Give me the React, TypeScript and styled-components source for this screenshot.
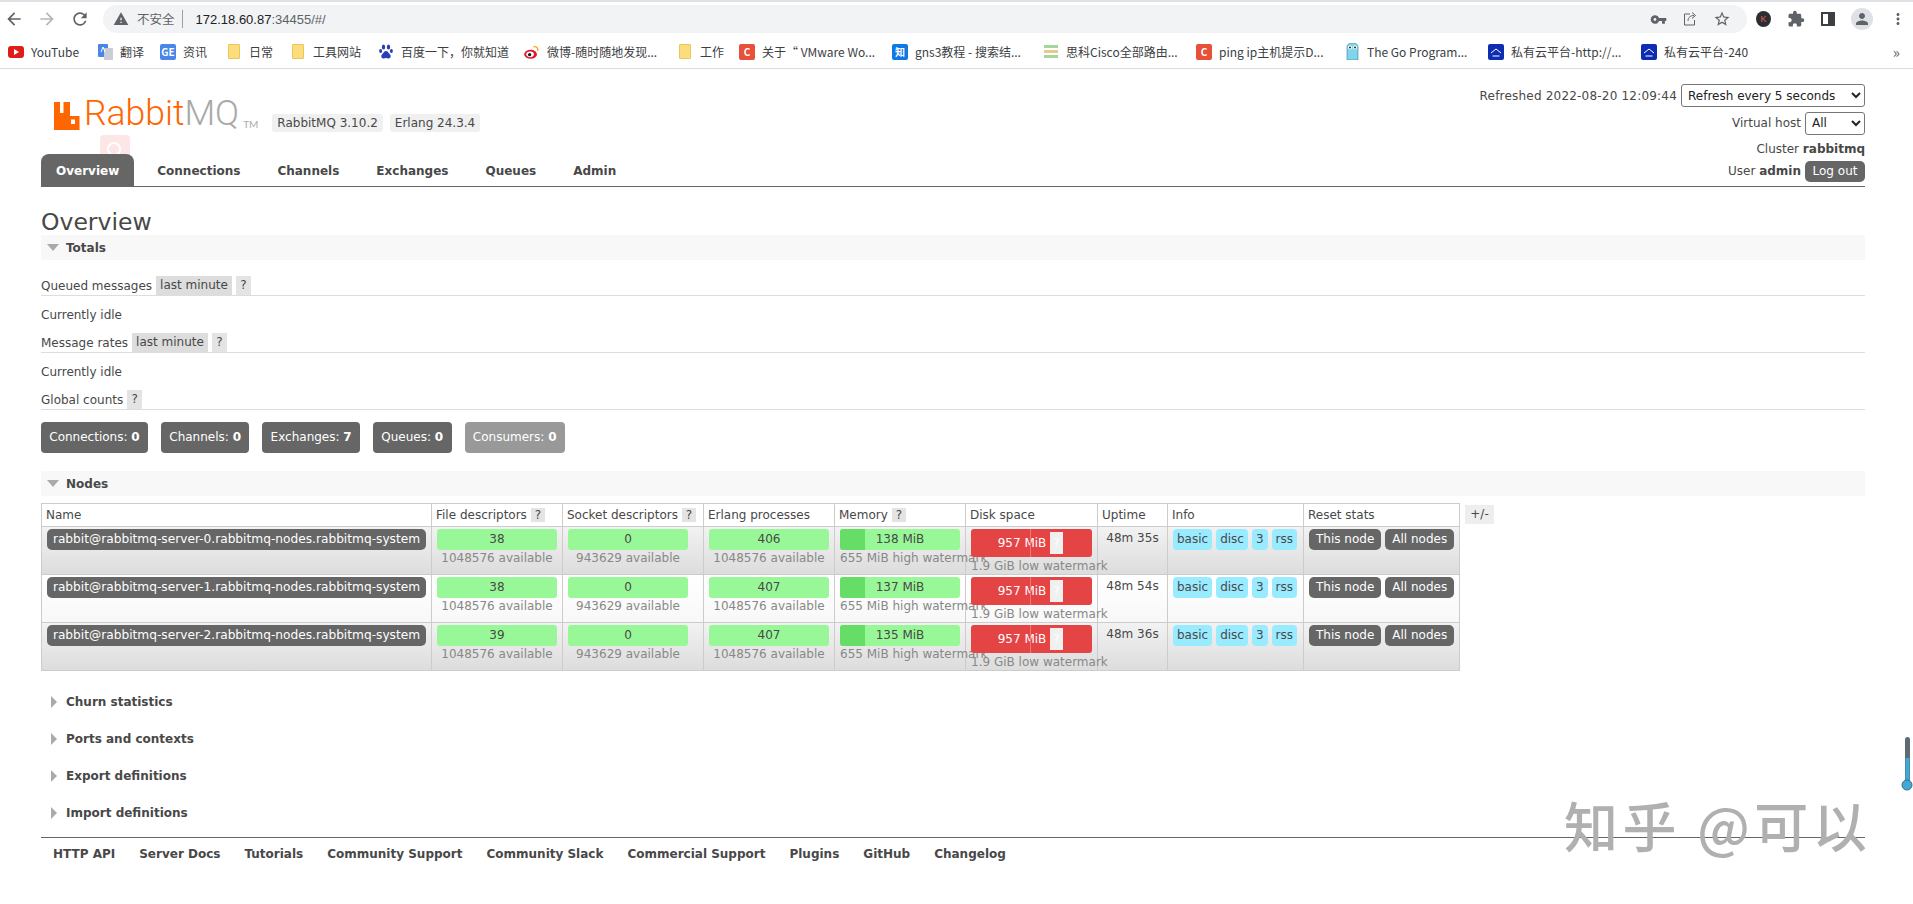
import styled, { createGlobalStyle } from "styled-components";
import {
  MdArrowBack,
  MdArrowForward,
  MdExtension,
  MdMoreVert,
  MdPerson,
  MdRefresh,
  MdStarBorder,
  MdVpnKey,
  MdWarning,
} from "react-icons/md";

const GlobalStyle = createGlobalStyle`
  html, body {
    margin: 0;
    padding: 0;
    background: #fff;
    overflow: hidden;
  }
  body {
    font-family: "DejaVu Sans", Verdana, sans-serif;
    font-size: 12px;
    color: #484848;
  }
`;

const Screen = styled.div`
  position: relative;
  width: 1913px;
  height: 904px;
  overflow: hidden;
`;

/* browser chrome */
const Toolbar = styled.div`
  height: 35px;
  box-sizing: border-box;
  border-top: 2px solid #dee1e6;
  padding: 3px 0 0 4px;
  display: flex;
  align-items: flex-start;
`;
const NavButton = styled.div<{ $dim?: boolean }>`
  width: 32px;
  height: 28px;
  display: flex;
  align-items: center;
  color: ${(p) => (p.$dim ? "#b4b6b9" : "#5f6368")};
  font-size: 20px;
  margin-right: 1px;
`;
const AddressBar = styled.div`
  margin-left: 0;
  width: 1644px;
  height: 28px;
  box-sizing: border-box;
  border-radius: 14px;
  background: #f1f3f4;
  display: flex;
  align-items: center;
  padding: 0 16px 0 10px;
  font-family: "Noto Sans CJK SC", "Liberation Sans", sans-serif;
  font-size: 13px;
  color: #5f6368;
`;
const NotSecure = styled.span`
  margin-left: 8px;
  padding-right: 7px;
  border-right: 1px solid #9aa0a6;
  line-height: 18px;
  font-size: 12.5px;
`;
const Host = styled.span`
  margin-left: 13px;
  font-size: 13px;
  color: #202124;
  font-family: "Liberation Sans", sans-serif;
  span {
    color: #5f6368;
  }
`;
const AddressActions = styled.div`
  margin-left: auto;
  display: flex;
  align-items: center;
  gap: 15px;
  font-size: 17px;
  color: #5f6368;
`;
const ChromeActions = styled.div`
  display: flex;
  align-items: center;
  height: 28px;
  margin-left: 9px;
  gap: 16px;
  font-size: 18px;
  color: #5f6368;
`;
const ProfileDot = styled.div`
  width: 15px;
  height: 16px;
  border-radius: 50%;
  background: #2b2f33;
  color: #e25c5c;
  font: 9px "Liberation Sans", sans-serif;
  text-align: center;
  line-height: 16px;
`;
const Avatar = styled.div`
  width: 22px;
  height: 22px;
  border-radius: 50%;
  background: #dee1e6;
  color: #5f6368;
  font-size: 18px;
  display: flex;
  align-items: center;
  justify-content: center;
`;

const BookmarkBar = styled.div`
  height: 34px;
  box-sizing: border-box;
  border-bottom: 1px solid #dadce0;
  display: flex;
  align-items: center;
  padding: 0 0 0 8px;
  font-family: "Noto Sans CJK SC", "Liberation Sans", sans-serif;
  font-size: 12px;
  color: #3c4043;
`;
const Bookmark = styled.div<{ $width: number }>`
  display: flex;
  align-items: center;
  width: ${(p) => p.$width}px;
  flex: none;
  white-space: nowrap;
`;
const BookmarkIconBox = styled.div`
  width: 16px;
  height: 16px;
  flex: none;
  margin-right: 7px;
  display: flex;
  align-items: center;
  justify-content: center;
`;
const LetterIcon = styled.div<{ $bg: string }>`
  width: 16px;
  height: 16px;
  background: ${(p) => p.$bg};
  color: #fff;
  border-radius: 2px;
  font-size: 10px;
  line-height: 16px;
  text-align: center;
  font-weight: 700;
`;
const Folder = styled.div`
  width: 12px;
  height: 15px;
  background: #fbdc7e;
  border: 1px solid #ecc65a;
  box-sizing: border-box;
  border-radius: 1px;
`;
const MoreBookmarks = styled.div`
  margin-left: auto;
  margin-right: 13px;
  font-size: 15px;
  color: #5f6368;
`;

/* rabbitmq page */
const Page = styled.div`
  padding: 0 48px 0 41px;
`;
const Header = styled.div`
  height: 117px;
  border-bottom: 1px solid #666;
  display: flex;
  justify-content: space-between;
`;
const HeaderLeft = styled.div`
  display: flex;
  flex-direction: column;
  justify-content: flex-end;
`;
const LogoRow = styled.div`
  display: flex;
  align-items: flex-end;
  padding: 0 0 0 12px;
  margin-bottom: 22px;
  position: relative;
`;
const LogoMark = styled.svg`
  flex: none;
  margin-bottom: 2px;
`;
const LogoText = styled.div`
  font-family: "Roboto", sans-serif;
  font-weight: 300;
  font-size: 35.5px;
  line-height: 37px;
  color: #f60;
  margin-left: 4px;
  span {
    color: #a9a9a9;
  }
`;
const Tm = styled.div`
  font-size: 10px;
  color: #aaa;
  font-family: "Lato", sans-serif;
  margin: 0 14px 2px 4px;
`;
const Version = styled.div`
  background: #f0f0f0;
  border-radius: 3px;
  padding: 0 5px;
  line-height: 18px;
  margin: 0 7px 0 0;
  font-size: 12px;
  position: relative;
`;
const SearchGhost = styled.div`
  position: absolute;
  left: 59px;
  top: 40px;
  width: 30px;
  height: 30px;
  background: #fce6e6;
  border-radius: 4px;
  color: #fff;
  display: flex;
  align-items: center;
  justify-content: center;
`;
const Tabs = styled.div`
  display: flex;
  align-items: flex-end;
  position: relative;
  height: 32px;
`;
const Tab = styled.a<{ $active?: boolean }>`
  height: 32px;
  box-sizing: border-box;
  padding: 0 15px;
  margin-right: ${(p) => (p.$active ? "8px" : "7px")};
  line-height: 34px;
  font-weight: 700;
  font-size: 12px;
  border-radius: 8px 8px 0 0;
  color: ${(p) => (p.$active ? "#fff" : "#484848")};
  background: ${(p) => (p.$active ? "#666" : "transparent")};
`;
const Login = styled.div`
  padding-top: 15px;
  display: flex;
  flex-direction: column;
  align-items: flex-end;
`;
const LoginRow = styled.div<{ $height: number }>`
  display: flex;
  align-items: center;
  gap: 4px;
  height: ${(p) => p.$height}px;
  b {
    font-weight: 700;
    color: #484848;
  }
`;
const RefreshedText = styled.span`
  letter-spacing: 0.2px;
`;
const RefreshSelect = styled.select<{ $width: number }>`
  width: ${(p) => p.$width}px;
  height: 23px;
  box-sizing: border-box;
  font-family: "DejaVu Sans", sans-serif;
  font-size: 12px;
  color: #222;
  background: #fff;
  border: 1px solid #767676;
  border-radius: 3px;
  padding: 0 0 0 2px;
`;
const LogOut = styled.button`
  height: 21px;
  width: 60px;
  padding: 0;
  border: 0;
  background: #666;
  color: #fff;
  font-family: "DejaVu Sans", sans-serif;
  font-size: 12px;
  border-radius: 5px;
`;

const Title = styled.h1`
  margin: 0;
  padding-top: 19px;
  height: 29px;
  font-weight: 400;
  font-size: 23.5px;
  line-height: 33px;
  color: #484848;
`;
const SectionHead = styled.div<{ $open?: boolean }>`
  display: flex;
  align-items: center;
  height: 25px;
  padding-left: ${(p) => (p.$open ? "6px" : "10px")};
  background: ${(p) => (p.$open ? "#f8f8f8" : "transparent")};
  font-weight: 700;
  font-size: 12px;
`;
const ArrowDown = styled.div`
  width: 0;
  height: 0;
  border-left: 6px solid transparent;
  border-right: 6px solid transparent;
  border-top: 7px solid #aaa;
  margin-right: 7px;
`;
const ArrowRight = styled.div`
  width: 0;
  height: 0;
  border-top: 6px solid transparent;
  border-bottom: 6px solid transparent;
  border-left: 6px solid #aaa;
  margin-right: 9px;
`;
const Legend = styled.div<{ $top: number }>`
  margin-top: ${(p) => p.$top}px;
  height: 19px;
  display: flex;
  align-items: center;
  gap: 4px;
  border-bottom: 1px solid #ddd;
`;
const RangeBadge = styled.span`
  background: #ddd;
  padding: 0 4px;
  line-height: 19px;
`;
const Help = styled.span`
  background: #e4e4e4;
  padding: 0 4px;
  line-height: 19px;
  width: 7px;
  text-align: center;
`;
const Idle = styled.div`
  margin-top: 10px;
  height: 19px;
  line-height: 19px;
`;
const Counts = styled.div`
  display: flex;
  gap: 13px;
  margin-top: 12px;
`;
const CountButton = styled.div<{ $muted?: boolean }>`
  height: 31px;
  line-height: 31px;
  padding: 0 8.3px;
  border-radius: 4px;
  color: #fff;
  background: ${(p) => (p.$muted ? "#999" : "#666")};
  b {
    font-weight: 700;
  }
`;

const NodesSection = styled.div`
  margin-top: 18px;
`;
const TableRow = styled.div`
  display: flex;
  align-items: flex-start;
  margin-top: 7px;
`;
const NodesTable = styled.table`
  border-collapse: collapse;
  table-layout: fixed;
  width: 1418px;
  border: 1px solid #ccc;
`;
const Head = styled.th<{ $width: number }>`
  width: ${(p) => p.$width}px;
  height: 23px;
  box-sizing: border-box;
  padding: 0 4px;
  font-weight: 400;
  text-align: left;
  white-space: nowrap;
  border-left: 1px solid #ccc;
  border-bottom: 1px solid #ccc;
`;
const NodeRow = styled.tr<{ $alt?: boolean }>`
  height: 48px;
  background: ${(p) =>
    p.$alt
      ? "linear-gradient(to bottom, #f2f2f2, #dcdcdc)"
      : "linear-gradient(to bottom, #fff, #f8f8f8)"};
`;
const Cell = styled.td`
  box-sizing: border-box;
  vertical-align: top;
  padding: 2px 5px 0;
  border-left: 1px solid #ccc;
  border-bottom: 1px solid #ccc;
  white-space: nowrap;
`;
const NodeName = styled.div`
  height: 21px;
  line-height: 21px;
  background: #666;
  color: #fff;
  border-radius: 5px;
  text-align: center;
  font-size: 12.2px;
  overflow: hidden;
`;
const Bar = styled.div`
  position: relative;
  width: 120px;
  height: 21px;
  line-height: 21px;
  background: #98f898;
  border-radius: 3px;
  text-align: center;
  overflow: hidden;
`;
const MemoryFill = styled.div`
  position: absolute;
  left: 0;
  top: 0;
  bottom: 0;
  background: #66dd66;
`;
const BarLabel = styled.span`
  position: relative;
`;
const Sub = styled.div`
  width: 120px;
  color: #888;
  line-height: 15px;
  margin-top: 1px;
  text-align: center;
`;
const SubLeft = styled(Sub)`
  text-align: left;
`;
const DiskSub = styled(SubLeft)`
  margin-top: 2px;
`;
const DiskBar = styled.div`
  position: relative;
  height: 28px;
  line-height: 28px;
  background: #e44444;
  color: #fff;
  border-radius: 3px;
  text-align: center;
  padding-right: 19px;
  box-sizing: border-box;
`;
const DiskMark = styled.div`
  position: absolute;
  left: 59px;
  top: 0;
  bottom: 0;
  width: 1px;
  background: #f07a7a;
`;
const DiskHelp = styled.div`
  position: absolute;
  left: 79px;
  top: 3px;
  width: 13px;
  height: 22px;
  line-height: 22px;
  background: #f0f0f0;
  color: #fff;
`;
const UptimeText = styled.div`
  line-height: 19px;
  text-align: center;
`;
const PillRow = styled.div`
  display: flex;
  gap: 4px;
`;
const InfoPill = styled.div`
  height: 21px;
  line-height: 21px;
  padding: 0 4px;
  background: #99ebff;
  border-radius: 4px;
  color: #484848;
`;
const ResetPill = styled.div`
  height: 21px;
  line-height: 21px;
  padding: 0 7px;
  background: #666;
  color: #fff;
  border-radius: 5px;
`;
const PlusMinus = styled.div`
  margin: 2px 0 0 5px;
  width: 29px;
  height: 19px;
  line-height: 19px;
  text-align: center;
  background: #eee;
`;

const CollapsedList = styled.div`
  display: flex;
  flex-direction: column;
  gap: 12px;
  margin-top: 18px;
`;
const Footer = styled.div`
  margin-top: 12px;
  border-top: 1px solid #666;
  display: flex;
  gap: 24px;
  padding: 7px 12px 0;
  font-weight: 700;
  font-size: 12px;
  line-height: 19px;
`;

/* overlays */
const Watermark = styled.div`
  position: absolute;
  left: 1564px;
  top: 790px;
  font-family: "Noto Sans CJK SC", sans-serif;
  font-weight: 500;
  font-size: 54px;
  line-height: 70px;
  letter-spacing: 4.4px;
  color: #b0b0b0;
  white-space: nowrap;
`;
const Thermometer = styled.svg`
  position: absolute;
  left: 1900px;
  top: 736px;
`;

const bookmarks = [
  { id: "yt", label: "YouTube", width: 89 },
  { id: "tr", label: "翻译", width: 63 },
  { id: "news", label: "资讯", width: 66 },
  { id: "folder", label: "日常", width: 64 },
  { id: "folder", label: "工具网站", width: 88 },
  { id: "baidu", label: "百度一下，你就知道", width: 146 },
  { id: "weibo", label: "微博-随时随地发现...", width: 153 },
  { id: "folder", label: "工作", width: 62 },
  { id: "c", label: "关于“ VMware Wo...", width: 153 },
  { id: "zhi", label: "gns3教程 - 搜索结...", width: 151 },
  { id: "lines", label: "思科Cisco全部路由...", width: 153 },
  { id: "c", label: "ping ip主机提示D...", width: 148 },
  { id: "go", label: "The Go Program...", width: 144 },
  { id: "cloud", label: "私有云平台-http://...", width: 153 },
  { id: "cloud", label: "私有云平台-240", width: 120 },
];

const BookmarkGlyph = ({ id }: { id: string }) => {
  switch (id) {
    case "yt":
      return (
        <svg width="16" height="12" viewBox="0 0 16 12">
          <rect width="16" height="12" rx="3" fill="#e01b1b" />
          <path d="M6 3l5 3-5 3z" fill="#fff" />
        </svg>
      );
    case "tr":
      return (
        <svg width="15" height="16" viewBox="0 0 15 16">
          <rect x="0" y="0" width="10" height="13" rx="1" fill="#4a86e8" />
          <rect x="6" y="4" width="9" height="12" rx="1" fill="#c9cdd4" />
          <path d="M3 8l2-5 2 5" stroke="#fff" fill="none" />
        </svg>
      );
    case "news":
      return <LetterIcon $bg="#4a86e8">GE</LetterIcon>;
    case "folder":
      return <Folder />;
    case "baidu":
      return (
        <svg width="14" height="16" viewBox="0 0 14 16" fill="#2a3fb5">
          <ellipse cx="4.5" cy="3" rx="1.7" ry="2.5" />
          <ellipse cx="9.5" cy="3" rx="1.7" ry="2.5" />
          <ellipse cx="1.6" cy="7" rx="1.5" ry="2.1" />
          <ellipse cx="12.4" cy="7" rx="1.5" ry="2.1" />
          <path d="M7 7c2 0 2.400 2 4 3.500 1.500 1.500.5 4-1.500 4-1 0-1.500-.4-2.500-.4s-1.500.4-2.500.4c-2 0-3-2.500-1.500-4C4.600 9 5 7 7 7z" />
        </svg>
      );
    case "weibo":
      return (
        <svg width="17" height="16" viewBox="0 0 17 16">
          <ellipse cx="7" cy="10.500" rx="6.800" ry="4.800" fill="#e6162d" />
          <ellipse cx="6.500" cy="10.500" rx="4" ry="3" fill="#fff" />
          <circle cx="6" cy="10.800" r="1.800" fill="#222" />
          <path d="M10 2.500c3-1 5.500 1.500 4.500 4.500" stroke="#f5a623" strokeWidth="1.500" fill="none" />
        </svg>
      );
    case "c":
      return <LetterIcon $bg="#e8503a">C</LetterIcon>;
    case "zhi":
      return <LetterIcon $bg="#0f7ae5">知</LetterIcon>;
    case "lines":
      return (
        <svg width="14" height="15" viewBox="0 0 14 15">
          <rect y="1" width="14" height="3" fill="#a4d79a" />
          <rect y="6" width="14" height="3" fill="#e9c98a" />
          <rect y="11" width="14" height="3" fill="#a4d79a" />
        </svg>
      );
    case "go":
      return (
        <svg width="15" height="17" viewBox="0 0 15 17">
          <path d="M2 4c0-2.500 2-4 5.500-4S13 1.500 13 4v13H2z" fill="#7fd5ea" stroke="#3b7f94" strokeWidth=".6" />
          <circle cx="5" cy="4.500" r="2" fill="#fff" />
          <circle cx="10" cy="4.500" r="2" fill="#fff" />
          <circle cx="5" cy="4.500" r="1" fill="#222" />
          <circle cx="10" cy="4.500" r="1" fill="#222" />
        </svg>
      );
    default:
      return (
        <svg width="16" height="16" viewBox="0 0 16 16">
          <rect width="16" height="16" rx="2" fill="#0f2db0" />
          <path d="M3 9l5-4 5 4M4.500 12h7" stroke="#fff" fill="none" />
        </svg>
      );
  }
};

const nodes = [
  { id: 0, fd: 38, erl: 406, mem: "138 MiB", up: "48m 35s", alt: true },
  { id: 1, fd: 38, erl: 407, mem: "137 MiB", up: "48m 54s", alt: false },
  { id: 2, fd: 39, erl: 407, mem: "135 MiB", up: "48m 36s", alt: true },
];

const tabs = ["Overview", "Connections", "Channels", "Exchanges", "Queues", "Admin"];
const counts = [
  ["Connections", 0],
  ["Channels", 0],
  ["Exchanges", 7],
  ["Queues", 0],
  ["Consumers", 0],
] as const;
const closedSections = [
  "Churn statistics",
  "Ports and contexts",
  "Export definitions",
  "Import definitions",
];
const footerLinks = [
  "HTTP API",
  "Server Docs",
  "Tutorials",
  "Community Support",
  "Community Slack",
  "Commercial Support",
  "Plugins",
  "GitHub",
  "Changelog",
];

const App = () => {
  return (
    <Screen>
      <GlobalStyle />
      <Toolbar>
        <NavButton>
          <MdArrowBack />
        </NavButton>
        <NavButton $dim>
          <MdArrowForward />
        </NavButton>
        <NavButton>
          <MdRefresh />
        </NavButton>
        <AddressBar>
          <MdWarning size={16} />
          <NotSecure>不安全</NotSecure>
          <Host>
            172.18.60.87<span>:34455/#/</span>
          </Host>
          <AddressActions>
            <MdVpnKey />
            <svg width="16" height="16" viewBox="0 0 16 16" fill="none" stroke="#5f6368" strokeWidth="1">
              <path d="M8 3H2.500v11h10V9M6 10c0-4 3-5.500 6-5.500M10 1.500l3.500 3-3.500 3" />
            </svg>
            <MdStarBorder size={18} />
          </AddressActions>
        </AddressBar>
        <ChromeActions>
          <ProfileDot>K</ProfileDot>
          <MdExtension />
          <svg width="14" height="14" viewBox="0 0 14 14" fill="none" stroke="#3c4043" strokeWidth="2">
            <rect x="1" y="1" width="12" height="12" />
            <rect x="8" y="1" width="5" height="12" fill="#3c4043" />
          </svg>
          <Avatar>
            <MdPerson />
          </Avatar>
          <MdMoreVert />
        </ChromeActions>
      </Toolbar>
      <BookmarkBar>
        {bookmarks.map((b) => (
          <Bookmark key={b.label} $width={b.width}>
            <BookmarkIconBox>
              <BookmarkGlyph id={b.id} />
            </BookmarkIconBox>
            {b.label}
          </Bookmark>
        ))}
        <MoreBookmarks>»</MoreBookmarks>
      </BookmarkBar>

      <Page>
        <Header>
          <HeaderLeft>
            <LogoRow>
              <LogoMark width="27" height="28" viewBox="0 0 27 28">
                <path
                  fillRule="evenodd"
                  fill="#f60"
                  d="M1 0h6v11h3.500V0H17v14h9.500v14H1zM18 17.500v4.500h4v-4.500z"
                />
              </LogoMark>
              <LogoText>
                Rabbit<span>MQ</span>
              </LogoText>
              <Tm>TM</Tm>
              <Version>RabbitMQ 3.10.2</Version>
              <Version>Erlang 24.3.4</Version>
              <SearchGhost>
                <svg width="20" height="20" viewBox="0 0 20 20" fill="none" stroke="#fff" strokeWidth="2">
                  <circle cx="9" cy="9" r="6" />
                  <path d="M13.500 13.500L18 18" />
                </svg>
              </SearchGhost>
            </LogoRow>
            <Tabs>
              {tabs.map((t, i) => (
                <Tab key={t} $active={i === 0}>
                  {t}
                </Tab>
              ))}
            </Tabs>
          </HeaderLeft>
          <Login>
            <LoginRow $height={23}>
              <RefreshedText>Refreshed 2022-08-20 12:09:44</RefreshedText>
              <RefreshSelect $width={184} defaultValue="5">
                <option value="5">Refresh every 5 seconds</option>
              </RefreshSelect>
            </LoginRow>
            <LoginRow $height={32}>
              Virtual host
              <RefreshSelect $width={60} defaultValue="all">
                <option value="all">All</option>
              </RefreshSelect>
            </LoginRow>
            <LoginRow $height={20}>
              <span>
                Cluster <b>rabbitmq</b>
              </span>
            </LoginRow>
            <LoginRow $height={24}>
              <span>
                User <b>admin</b>
              </span>
              <LogOut>Log out</LogOut>
            </LoginRow>
          </Login>
        </Header>

        <Title>Overview</Title>
        <SectionHead $open>
          <ArrowDown />
          Totals
        </SectionHead>
        <Legend $top={16}>
          Queued messages <RangeBadge>last minute</RangeBadge> <Help>?</Help>
        </Legend>
        <Idle>Currently idle</Idle>
        <Legend $top={8}>
          Message rates <RangeBadge>last minute</RangeBadge> <Help>?</Help>
        </Legend>
        <Idle>Currently idle</Idle>
        <Legend $top={8}>
          Global counts <Help>?</Help>
        </Legend>
        <Counts>
          {counts.map(([label, value]) => (
            <CountButton key={label} $muted={label === "Consumers"}>
              {label}: <b>{value}</b>
            </CountButton>
          ))}
        </Counts>

        <NodesSection>
          <SectionHead $open>
            <ArrowDown />
            Nodes
          </SectionHead>
          <TableRow>
            <NodesTable>
              <thead>
                <tr>
                  <Head $width={390}>Name</Head>
                  <Head $width={131}>
                    File descriptors <Help>?</Help>
                  </Head>
                  <Head $width={141}>
                    Socket descriptors <Help>?</Help>
                  </Head>
                  <Head $width={131}>Erlang processes</Head>
                  <Head $width={131}>
                    Memory <Help>?</Help>
                  </Head>
                  <Head $width={132}>Disk space</Head>
                  <Head $width={70}>Uptime</Head>
                  <Head $width={136}>Info</Head>
                  <Head $width={156}>Reset stats</Head>
                </tr>
              </thead>
              <tbody>
                {nodes.map((n) => (
                  <NodeRow key={n.id} $alt={n.alt}>
                    <Cell>
                      <NodeName>rabbit@rabbitmq-server-{n.id}.rabbitmq-nodes.rabbitmq-system</NodeName>
                    </Cell>
                    <Cell>
                      <Bar>{n.fd}</Bar>
                      <Sub>1048576 available</Sub>
                    </Cell>
                    <Cell>
                      <Bar>0</Bar>
                      <Sub>943629 available</Sub>
                    </Cell>
                    <Cell>
                      <Bar>{n.erl}</Bar>
                      <Sub>1048576 available</Sub>
                    </Cell>
                    <Cell>
                      <Bar>
                        <MemoryFill style={{ width: "21%" }} />
                        <BarLabel>{n.mem}</BarLabel>
                      </Bar>
                      <SubLeft>655 MiB high watermark</SubLeft>
                    </Cell>
                    <Cell>
                      <DiskBar>
                        957 MiB
                        <DiskMark />
                        <DiskHelp>?</DiskHelp>
                      </DiskBar>
                      <DiskSub>1.9 GiB low watermark</DiskSub>
                    </Cell>
                    <Cell>
                      <UptimeText>{n.up}</UptimeText>
                    </Cell>
                    <Cell>
                      <PillRow>
                        <InfoPill>basic</InfoPill>
                        <InfoPill>disc</InfoPill>
                        <InfoPill>3</InfoPill>
                        <InfoPill>rss</InfoPill>
                      </PillRow>
                    </Cell>
                    <Cell>
                      <PillRow>
                        <ResetPill>This node</ResetPill>
                        <ResetPill>All nodes</ResetPill>
                      </PillRow>
                    </Cell>
                  </NodeRow>
                ))}
              </tbody>
            </NodesTable>
            <PlusMinus>+/-</PlusMinus>
          </TableRow>
        </NodesSection>

        <CollapsedList>
          {closedSections.map((s) => (
            <SectionHead key={s}>
              <ArrowRight />
              {s}
            </SectionHead>
          ))}
        </CollapsedList>
        <Footer>
          {footerLinks.map((l) => (
            <span key={l}>{l}</span>
          ))}
        </Footer>
      </Page>

      <Watermark>知乎 @可以</Watermark>
      <Thermometer width="13" height="56" viewBox="0 0 13 56">
        <rect x="5" y="1" width="5" height="46" rx="2.500" fill="#5f6b73" />
        <rect x="5.500" y="22" width="4" height="26" fill="#3fa9d8" />
        <circle cx="7" cy="49" r="5" fill="#3fa9d8" stroke="#4a6a7c" />
      </Thermometer>
    </Screen>
  );
};

export default App;
